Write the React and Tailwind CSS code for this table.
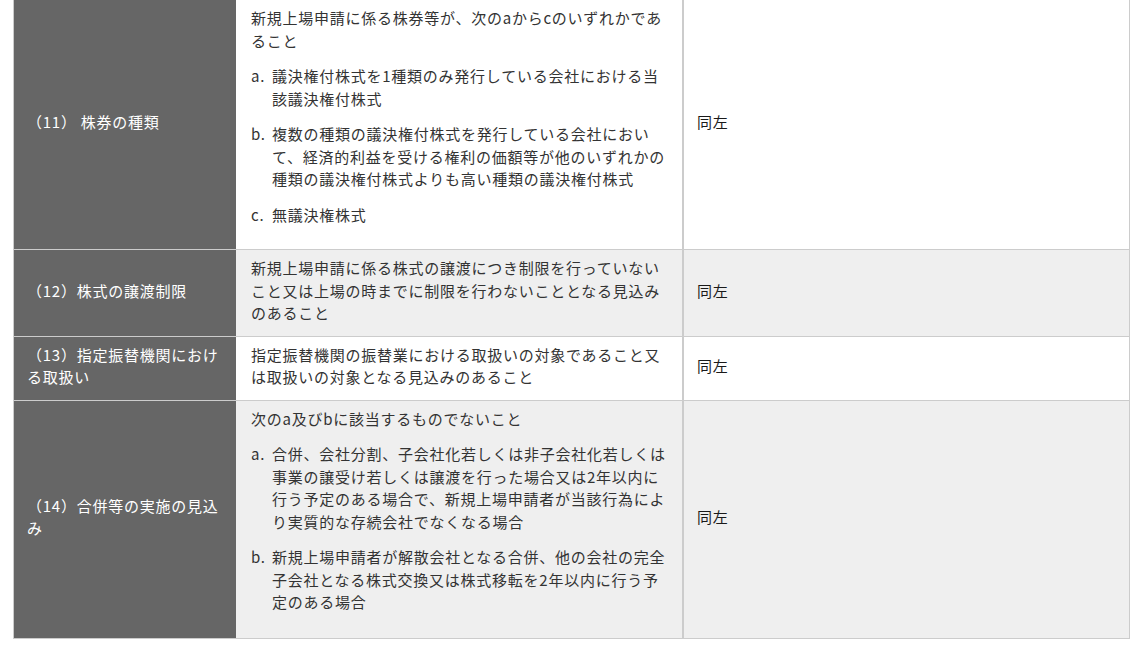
import React from "react";

const font = "font-['Noto_Sans_CJK_JP','Noto_Sans_CJK_SC',sans-serif]";

function Item({ mark, children, tight }) {
  return (
    <li className={`flex ${tight ? "mb-[12px]" : "mb-[13px]"}`}>
      <span className="w-[21px] shrink-0">{mark}</span>
      <span className="min-w-0 flex-1">{children}</span>
    </li>
  );
}

const rows = [
  {
    bg: "bg-white",
    head: "（11） 株券の種類",
    body: (
      <>
        <p className="mb-[13px]">新規上場申請に係る株券等が、次のaからcのいずれかであること</p>
        <ul>
          <Item mark="a.">議決権付株式を1種類のみ発行している会社における当該議決権付株式</Item>
          <Item mark="b.">複数の種類の議決権付株式を発行している会社において、経済的利益を受ける権利の価額等が他のいずれかの種類の議決権付株式よりも高い種類の議決権付株式</Item>
          <Item mark="c." tight>無議決権株式</Item>
        </ul>
      </>
    ),
  },
  {
    bg: "bg-[#efefef]",
    head: "（12）株式の譲渡制限",
    body: <p>新規上場申請に係る株式の譲渡につき制限を行っていないこと又は上場の時までに制限を行わないこととなる見込みのあること</p>,
  },
  {
    bg: "bg-white",
    head: "（13）指定振替機関における取扱い",
    body: <p>指定振替機関の振替業における取扱いの対象であること又は取扱いの対象となる見込みのあること</p>,
  },
  {
    bg: "bg-[#efefef]",
    head: "（14）合併等の実施の見込み",
    body: (
      <>
        <p className="mb-[13px]">次のa及びbに該当するものでないこと</p>
        <ul>
          <Item mark="a.">合併、会社分割、子会社化若しくは非子会社化若しくは事業の譲受け若しくは譲渡を行った場合又は2年以内に行う予定のある場合で、新規上場申請者が当該行為により実質的な存続会社でなくなる場合</Item>
          <Item mark="b.">新規上場申請者が解散会社となる合併、他の会社の完全子会社となる株式交換又は株式移転を2年以内に行う予定のある場合</Item>
        </ul>
      </>
    ),
  },
];

export default function App() {
  return (
    <div className={`min-h-[659px] w-[1138px] bg-white pl-[13px] ${font} text-[15px] leading-[22.5px] tracking-[0.05em]`}>
      <table className="w-[1117px] table-fixed border-separate border-spacing-0">
        <colgroup>
          <col className="w-[223px]" />
          <col className="w-[448px]" />
          <col className="w-[446px]" />
        </colgroup>
        <tbody>
          {rows.map((r, i) => (
            <tr key={i}>
              <td className="border-b border-l border-[#cccccc] bg-[#666666] px-[13px] pt-[7px] pb-[11px] align-middle text-white">
                {r.head}
              </td>
              <td className={`border-b border-r-2 border-[#cccccc] ${r.bg} pl-[15px] pr-[15px] pt-[7px] pb-[11px] align-top text-[#333333]`}>
                {r.body}
              </td>
              <td className={`border-b border-r border-[#cccccc] ${r.bg} pl-[13px] pr-[13px] pt-[7px] pb-[11px] align-middle text-[#1a1a1a]`}>
                同左
              </td>
            </tr>
          ))}
        </tbody>
      </table>
    </div>
  );
}
